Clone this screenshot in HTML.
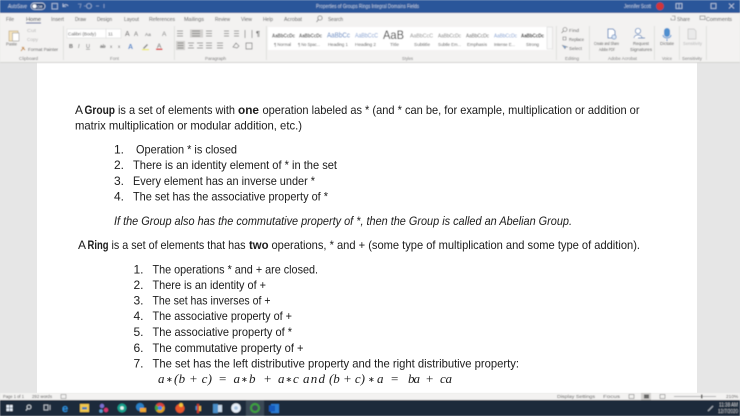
<!DOCTYPE html>
<html lang="en"><head><meta charset="utf-8"><title>Properties of Groups Rings Integral Domains Fields - Word</title>
<style>
html,body{margin:0;padding:0;width:740px;height:416px;overflow:hidden;background:#e6e6e6}
svg{display:block}
text{font-family:"Liberation Sans",sans-serif}
.d{font-size:12px;fill:#1a1a1a}
.b{font-weight:bold}
.i{font-style:italic}
.m{font-family:"Liberation Serif",serif;font-style:italic;font-size:13px;fill:#1a1a1a}
.u{font-family:"Liberation Serif",serif;font-size:13px;fill:#1a1a1a}
.a{font-size:8px;font-style:normal}
.r{font-size:5px;fill:#555}
.t{font-size:5.5px;fill:#555}
.g{font-size:4.6px;fill:#777}
.s{font-size:4.8px;fill:#555}
.w{font-size:5px;fill:#c5d2e6}
.e{font-size:5px;fill:#c8ccd2}
</style></head>
<body>
<svg width="740" height="416" viewBox="0 0 740 416" xmlns="http://www.w3.org/2000/svg">
<rect width="740" height="416" fill="#e6e6e6"/>
<rect x="37" y="62" width="660" height="331" fill="#fff"/>

<g filter="url(#bl)">
<defs><filter id="bl" x="0" y="0" width="100%" height="100%"><feGaussianBlur stdDeviation="0.45"/></filter></defs>
<!-- title bar -->
<rect width="740" height="13" fill="#2b579a"/>
<text class="w" x="8" y="8" textLength="19" lengthAdjust="spacingAndGlyphs" font-style="italic">AutoSave</text>
<rect x="31" y="3" width="14" height="6.500" rx="3.200" fill="#1f3f75" stroke="#dfe6f2" stroke-width=".7"/>
<circle cx="34.500" cy="6.200" r="2" fill="#fff"/>
<text x="37" y="8" font-size="4" fill="#fff">Off</text>
<rect x="52" y="3.500" width="5.500" height="5.500" fill="none" stroke="#b9c8e0" stroke-width=".8"/>
<path d="M63 7c1-3 4-3 5-1M63 3.500v3h3" fill="none" stroke="#b9c8e0" stroke-width=".8"/>
<path d="M78 4l3 0l-1 4M84 6h2" fill="none" stroke="#7f98c2" stroke-width=".8"/>
<circle cx="89" cy="6" r="2.500" fill="none" stroke="#9fb3d4" stroke-width=".8"/>
<path d="M96 6h3M104 4v4" stroke="#8fa6cc" stroke-width=".8"/>
<text class="w" x="316" y="8" textLength="103" lengthAdjust="spacingAndGlyphs">Properties of Groups Rings Integral Domains Fields</text>
<text class="w" x="624" y="8" textLength="27" lengthAdjust="spacingAndGlyphs">Jennifer Scott</text>
<circle cx="660" cy="6.300" r="3.800" fill="#d13438"/>
<rect x="676" y="3.500" width="6" height="5" fill="none" stroke="#cfd9ea" stroke-width=".7"/>
<path d="M679 3.500v5" stroke="#cfd9ea" stroke-width=".6"/>
<rect x="711" y="3.500" width="5" height="5" fill="none" stroke="#cfd9ea" stroke-width=".7"/>
<path d="M729 3.500l5 5M734 3.500l-5 5" stroke="#cfd9ea" stroke-width=".7"/>

<!-- tabs + ribbon -->
<rect y="13" width="740" height="49" fill="#f3f2f1"/>
<rect y="62" width="740" height="1" fill="#d4d3d2"/>
<text class="t" x="6" y="21" textLength="8" lengthAdjust="spacingAndGlyphs">File</text>
<text class="t" x="26" y="21" textLength="15" lengthAdjust="spacingAndGlyphs" style="fill:#333">Home</text>
<rect x="26" y="22.500" width="15" height="1" fill="#2b579a"/>
<text class="t" x="51" y="21" textLength="13" lengthAdjust="spacingAndGlyphs">Insert</text>
<text class="t" x="75" y="21" textLength="11" lengthAdjust="spacingAndGlyphs">Draw</text>
<text class="t" x="97" y="21" textLength="15" lengthAdjust="spacingAndGlyphs">Design</text>
<text class="t" x="124" y="21" textLength="15" lengthAdjust="spacingAndGlyphs">Layout</text>
<text class="t" x="149" y="21" textLength="26" lengthAdjust="spacingAndGlyphs">References</text>
<text class="t" x="184" y="21" textLength="20" lengthAdjust="spacingAndGlyphs">Mailings</text>
<text class="t" x="215" y="21" textLength="15" lengthAdjust="spacingAndGlyphs">Review</text>
<text class="t" x="241" y="21" textLength="11" lengthAdjust="spacingAndGlyphs">View</text>
<text class="t" x="263" y="21" textLength="10" lengthAdjust="spacingAndGlyphs">Help</text>
<text class="t" x="284" y="21" textLength="18" lengthAdjust="spacingAndGlyphs">Acrobat</text>
<circle cx="320" cy="18" r="2.200" fill="none" stroke="#666" stroke-width=".7"/><path d="M318.500 19.500l-2 2.500" stroke="#666" stroke-width=".7"/>
<text class="t" x="328" y="21" textLength="15" lengthAdjust="spacingAndGlyphs">Search</text>
<path d="M672 16h3v4h-4v-2" fill="none" stroke="#777" stroke-width=".6"/>
<text class="t" x="677" y="21" textLength="13" lengthAdjust="spacingAndGlyphs">Share</text>
<rect x="700" y="16" width="5" height="3.500" fill="none" stroke="#777" stroke-width=".6"/>
<text class="t" x="706" y="21" textLength="26" lengthAdjust="spacingAndGlyphs">Comments</text>

<!-- separators -->
<g fill="#dcdbda">
<rect x="63" y="26" width=".8" height="34"/><rect x="174" y="26" width=".8" height="34"/><rect x="266" y="26" width=".8" height="34"/>
<rect x="556" y="26" width=".8" height="34"/><rect x="589" y="26" width=".8" height="34"/><rect x="654" y="26" width=".8" height="34"/>
<rect x="679" y="26" width=".8" height="34"/><rect x="706" y="26" width=".8" height="34"/>
</g>
<!-- clipboard -->
<rect x="9" y="31" width="9" height="10" fill="#f5e4bd" stroke="#b9a578" stroke-width=".6"/>
<rect x="12.500" y="33" width="6.500" height="8" fill="#fff" stroke="#999" stroke-width=".6"/>
<text class="s" x="6" y="45.500" textLength="11" lengthAdjust="spacingAndGlyphs">Paste</text>
<text class="s" x="27" y="32" textLength="9" lengthAdjust="spacingAndGlyphs" style="fill:#b5b5b5">Cut</text>
<text class="s" x="27" y="41" textLength="11" lengthAdjust="spacingAndGlyphs" style="fill:#b5b5b5">Copy</text>
<path d="M22 47l3 3M21 51l3-4" stroke="#c68a3a" stroke-width="1"/>
<text class="s" x="28" y="51" textLength="30" lengthAdjust="spacingAndGlyphs">Format Painter</text>
<text class="g" x="19" y="60" textLength="19" lengthAdjust="spacingAndGlyphs">Clipboard</text>
<!-- font -->
<rect x="67" y="29" width="39" height="9" fill="#fff" stroke="#d0d0d0" stroke-width=".4"/>
<text class="s" x="68" y="35.500" textLength="28" lengthAdjust="spacingAndGlyphs">Calibri (Body)</text>
<rect x="106" y="29" width="15" height="9" fill="#fff" stroke="#d0d0d0" stroke-width=".4"/>
<text class="s" x="108" y="35.500">11</text>
<text x="125" y="36" font-size="7" fill="#555">A</text><text x="134" y="36" font-size="6" fill="#555">A</text>
<text class="s" x="145" y="36">Aa</text>
<text x="162" y="36" font-size="6.500" fill="#777">A</text>
<text x="69" y="48" font-size="5.500" font-weight="bold" fill="#555">B</text>
<text x="78" y="48" font-size="5.500" font-style="italic" fill="#555">I</text>
<text x="86" y="48" font-size="5.500" fill="#555" text-decoration="underline">U</text>
<text x="100" y="48" font-size="5" fill="#555" text-decoration="line-through">ab</text>
<text x="110" y="48" font-size="4.500" fill="#555">x</text><text x="118" y="48" font-size="4.500" fill="#555">x</text>
<text x="128" y="49" font-size="7" font-weight="bold" fill="#3f7fc9">A</text>
<path d="M143 48l4-4 1 1-4 4z" fill="#888"/><rect x="142" y="49" width="7" height="1.200" fill="#eeeb5a"/>
<text x="157" y="48" font-size="6.500" fill="#444">A</text><rect x="156" y="48.500" width="6.500" height="1.500" fill="#d22"/>
<text class="g" x="110" y="60" textLength="9" lengthAdjust="spacingAndGlyphs">Font</text>
<!-- paragraph -->
<g stroke="#777" stroke-width=".7" fill="none">
<path d="M177 31h6M177 33.500h6M177 36h6"/>
<rect x="190" y="29.500" width="13" height="8" fill="#d2d0ce" stroke="none"/>
<path d="M192 31h8M192 33.500h8M192 36h8"/>
<path d="M206 31h6M206 33.500h6M206 36h6"/>
<path d="M224 31h5M224 33.500h5M224 36h5M234 31h5M234 33.500h5M234 36h5M245 30v8M252 30v8"/>
<rect x="176" y="41" width="9" height="9" fill="#d2d0ce" stroke="none"/>
<path d="M177.500 43h6M177.500 45.500h6M177.500 48h6M188 43h6M189 45.500h4M188 48h6M197 43h6M199 45.500h4M197 48h6M206 43h6M206 45.500h6M206 48h6M217 43h6M217 45.500h6M217 48h6"/>
<path d="M233 47l3-4 3 3-2 2zM246 43h6v6h-6z"/>
</g>
<text x="256" y="36" font-size="7" font-weight="bold" fill="#555">¶</text>
<text class="g" x="205" y="60" textLength="21" lengthAdjust="spacingAndGlyphs">Paragraph</text>
<!-- styles -->
<rect x="268" y="27" width="284" height="23" fill="#fff"/>
<g font-size="5.500" fill="#333">
<text x="272" y="37.500" textLength="23" lengthAdjust="spacingAndGlyphs" font-weight="bold" fill="#555">AaBbCcDc</text>
<text x="299" y="37.500" textLength="23" lengthAdjust="spacingAndGlyphs" font-weight="bold" fill="#555">AaBbCcDc</text>
<text x="327" y="37.500" textLength="23" lengthAdjust="spacingAndGlyphs" font-size="7" fill="#4f7fc0">AaBbCc</text>
<text x="355" y="37.500" textLength="23" lengthAdjust="spacingAndGlyphs" font-size="6.500" fill="#7a9bd0">AaBbCcC</text>
<text x="383" y="39" textLength="21" lengthAdjust="spacingAndGlyphs" font-size="12" fill="#333">AaB</text>
<text x="410" y="37.500" textLength="23" lengthAdjust="spacingAndGlyphs" fill="#888">AaBbCcC</text>
<text x="438" y="37.500" textLength="23" lengthAdjust="spacingAndGlyphs" fill="#777">AaBbCcDc</text>
<text x="466" y="37.500" textLength="23" lengthAdjust="spacingAndGlyphs" fill="#555">AaBbCcDc</text>
<text x="494" y="37.500" textLength="23" lengthAdjust="spacingAndGlyphs" fill="#7a9bd0">AaBbCcDc</text>
<text x="521" y="37.500" textLength="23" lengthAdjust="spacingAndGlyphs" font-weight="bold" fill="#222">AaBbCcDc</text>
</g>
<text class="s" x="274" y="46" textLength="17" lengthAdjust="spacingAndGlyphs">¶ Normal</text>
<text class="s" x="298" y="46" textLength="22" lengthAdjust="spacingAndGlyphs">¶ No Spac...</text>
<text class="s" x="328" y="46" textLength="20" lengthAdjust="spacingAndGlyphs">Heading 1</text>
<text class="s" x="355" y="46" textLength="21" lengthAdjust="spacingAndGlyphs">Heading 2</text>
<text class="s" x="390" y="46" textLength="9" lengthAdjust="spacingAndGlyphs">Title</text>
<text class="s" x="414" y="46" textLength="16" lengthAdjust="spacingAndGlyphs">Subtitle</text>
<text class="s" x="438" y="46" textLength="23" lengthAdjust="spacingAndGlyphs">Subtle Em...</text>
<text class="s" x="467" y="46" textLength="20" lengthAdjust="spacingAndGlyphs">Emphasis</text>
<text class="s" x="494" y="46" textLength="21" lengthAdjust="spacingAndGlyphs">Intense E...</text>
<text class="s" x="526" y="46" textLength="13" lengthAdjust="spacingAndGlyphs">Strong</text>
<rect x="547" y="27" width="5.500" height="22" fill="#f8f8f8" stroke="#c8c8c8" stroke-width=".4"/>
<text class="g" x="402" y="60" textLength="11" lengthAdjust="spacingAndGlyphs">Styles</text>
<!-- editing -->
<circle cx="565" cy="29.500" r="2" fill="none" stroke="#666" stroke-width=".6"/><path d="M563.500 31l-2 2" stroke="#666" stroke-width=".6"/>
<text class="s" x="569" y="32" textLength="10" lengthAdjust="spacingAndGlyphs">Find</text>
<path d="M563 37h3v3h-3z" fill="none" stroke="#777" stroke-width=".6"/>
<text class="s" x="569" y="41" textLength="15" lengthAdjust="spacingAndGlyphs">Replace</text>
<path d="M562 45l3 4 1-2 2 0z" fill="#7aa0cc" stroke="#666" stroke-width=".3"/>
<text class="s" x="569" y="50" textLength="13" lengthAdjust="spacingAndGlyphs">Select</text>
<text class="g" x="565" y="60" textLength="14" lengthAdjust="spacingAndGlyphs">Editing</text>
<!-- acrobat -->
<path d="M608 29h5l2 2v7h-7z" fill="#fff" stroke="#3a6fb0" stroke-width=".8"/><circle cx="614" cy="37" r="2.200" fill="#dbe7f6" stroke="#3a6fb0" stroke-width=".6"/>
<text class="s" x="594" y="45" textLength="25" lengthAdjust="spacingAndGlyphs">Create and Share</text>
<text class="s" x="599" y="51" textLength="16" lengthAdjust="spacingAndGlyphs">Adobe PDF</text>
<circle cx="638" cy="31" r="2.700" fill="#fff" stroke="#3a6fb0" stroke-width=".7"/><path d="M634 38c0-4 8-4 8 0" fill="#fff" stroke="#3a6fb0" stroke-width=".7"/><path d="M638 38h7" stroke="#3a6fb0" stroke-width=".8"/>
<text class="s" x="633" y="45" textLength="16" lengthAdjust="spacingAndGlyphs">Request</text>
<text class="s" x="630" y="51" textLength="22" lengthAdjust="spacingAndGlyphs">Signatures</text>
<text class="g" x="608" y="60" textLength="29" lengthAdjust="spacingAndGlyphs">Adobe Acrobat</text>
<!-- voice -->
<rect x="664" y="28" width="6" height="9" rx="3" fill="#4f8fcf"/><path d="M663 35c0 4 8 4 8 0M667 39v2" fill="none" stroke="#4f8fcf" stroke-width="1"/>
<text class="s" x="660" y="45" textLength="14" lengthAdjust="spacingAndGlyphs">Dictate</text>
<text class="g" x="662" y="60" textLength="10" lengthAdjust="spacingAndGlyphs">Voice</text>
<!-- sensitivity -->
<path d="M688 29h6l2 2v8h-8z" fill="#eaeaea" stroke="#c5c5c5" stroke-width=".7"/>
<text class="s" x="683" y="45" textLength="19" lengthAdjust="spacingAndGlyphs" style="fill:#b5b5b5">Sensitivity</text>
<text class="g" x="682" y="60" textLength="20" lengthAdjust="spacingAndGlyphs">Sensitivity</text>

<!-- status bar -->
<rect y="393" width="740" height="7" fill="#f3f2f1"/>
<text class="s" x="3" y="398" textLength="21" lengthAdjust="spacingAndGlyphs">Page 1 of 1</text>
<text class="s" x="32" y="398" textLength="20" lengthAdjust="spacingAndGlyphs">292 words</text>
<rect x="61" y="394.500" width="5" height="4" fill="none" stroke="#777" stroke-width=".5"/>
<text class="s" x="557" y="398" textLength="38" lengthAdjust="spacingAndGlyphs">Display Settings</text>
<text class="s" x="603" y="398" textLength="17" lengthAdjust="spacingAndGlyphs">Focus</text>
<rect x="629" y="394.500" width="5" height="4" fill="none" stroke="#666" stroke-width=".5"/>
<rect x="641" y="393" width="10" height="7" fill="#d2d0ce"/><rect x="644" y="394.500" width="5" height="4" fill="#666"/>
<rect x="660" y="394.500" width="5" height="4" fill="none" stroke="#666" stroke-width=".5"/>
<rect x="674" y="396.200" width="42" height=".6" fill="#888"/><rect x="701" y="394.500" width="1.500" height="4" fill="#555"/>
<text class="s" x="726" y="398">210%</text>

<!-- taskbar -->
<rect y="400" width="740" height="16" fill="#1b2a3b"/>
<rect x="246" y="400" width="18" height="16" fill="#3a4857"/>
<g fill="#e8f0fa"><rect x="6.500" y="405" width="2.800" height="2.800"/><rect x="9.800" y="405" width="2.800" height="2.800"/><rect x="6.500" y="408.300" width="2.800" height="2.800"/><rect x="9.800" y="408.300" width="2.800" height="2.800"/></g>
<circle cx="29" cy="407" r="2" fill="none" stroke="#e0e6ee" stroke-width=".8"/><path d="M27.500 408.500l-1.500 2" stroke="#e0e6ee" stroke-width=".8"/>
<rect x="44" y="405" width="4" height="5" fill="none" stroke="#e0e6ee" stroke-width=".7"/><path d="M50 405v5" stroke="#e0e6ee" stroke-width=".7"/>
<text x="62" y="412" font-size="11" font-weight="bold" style="fill:#2f8fdc">e</text>
<rect x="80" y="404" width="9" height="8" fill="#f1c84b"/><rect x="82" y="407" width="5" height="2.500" fill="#4a7fb5"/>
<circle cx="102" cy="406" r="2.200" fill="#7b6fd0"/><circle cx="106" cy="410" r="2.200" fill="#d8366f"/><circle cx="101" cy="411" r="1.800" fill="#5a9fd0"/>
<circle cx="122" cy="408" r="4.500" fill="#16a08d"/><circle cx="122" cy="408" r="1.800" fill="#e8f8f4"/>
<circle cx="140" cy="407" r="4" fill="#2a80c8"/><rect x="140" y="408" width="6" height="4" fill="#f0a830"/>
<circle cx="160" cy="408" r="4.800" fill="#e0a020"/><path d="M160 408L156 405A4.800 4.800 0 0 1 164.500 406z" fill="#d9453a"/><path d="M160 408l-3.800 3a4.800 4.800 0 0 1-.4-6z" fill="#3fa040"/><circle cx="160" cy="408" r="2" fill="#4285f4"/>
<circle cx="180" cy="408.500" r="4.500" fill="#e8562a"/><circle cx="181" cy="405" r="2" fill="#f5c33b"/>
<rect x="197" y="404" width="2" height="9" fill="#c83c2c"/><rect x="199" y="406" width="2" height="5" fill="#e6b34a"/><rect x="195.500" y="406" width="1.500" height="4" fill="#3a80c0"/>
<rect x="213" y="404" width="5" height="9" fill="#4a8ec8"/><rect x="218" y="405" width="4" height="7" fill="#c8d8e8"/>
<circle cx="236" cy="408" r="4.800" fill="#e6eef8"/><circle cx="236" cy="408" r="1.800" fill="#a8c4e0"/>
<circle cx="255" cy="408" r="4" fill="none" stroke="#3da13d" stroke-width="2"/>
<rect x="271" y="404" width="8" height="9" fill="#2b7cd3"/><rect x="269" y="405.500" width="6" height="6" fill="#185abd"/>
<path d="M708 411l3-3 2-2" stroke="#aab2bc" stroke-width="1.200"/>
<text class="e" x="719" y="406.500" textLength="19" lengthAdjust="spacingAndGlyphs">11:38 AM</text>
<text class="e" x="718" y="413" textLength="20" lengthAdjust="spacingAndGlyphs">12/7/2020</text>
</g>

<!-- document -->
<g filter="url(#bl2)">
<defs><filter id="bl2" x="0" y="0" width="100%" height="100%"><feGaussianBlur stdDeviation="0.25"/></filter></defs>
<text class="d" x="75" y="114">A</text>
<text class="d b" x="84.500" y="114" textLength="30.500" lengthAdjust="spacingAndGlyphs">Group</text>
<text class="d" x="118" y="114" textLength="117" lengthAdjust="spacingAndGlyphs">is a set of elements with</text>
<text class="d b" x="238" y="114" textLength="21" lengthAdjust="spacingAndGlyphs">one</text>
<text class="d" x="262.500" y="114" textLength="377" lengthAdjust="spacingAndGlyphs">operation labeled as * (and * can be, for example, multiplication or addition or</text>
<text class="d" x="75" y="129.500" textLength="227" lengthAdjust="spacingAndGlyphs">matrix multiplication or modular addition, etc.)</text>

<text class="d" x="114" y="153.500">1.</text>
<text class="d" x="136" y="153.500" textLength="101" lengthAdjust="spacingAndGlyphs">Operation * is closed</text>
<text class="d" x="114" y="169">2.</text>
<text class="d" x="133" y="169" textLength="204" lengthAdjust="spacingAndGlyphs">There is an identity element of * in the set</text>
<text class="d" x="114" y="185">3.</text>
<text class="d" x="133" y="185" textLength="182" lengthAdjust="spacingAndGlyphs">Every element has an inverse under *</text>
<text class="d" x="114" y="200.500">4.</text>
<text class="d" x="133" y="200.500" textLength="195" lengthAdjust="spacingAndGlyphs">The set has the associative property of *</text>

<text class="d i" x="114" y="225" textLength="458" lengthAdjust="spacingAndGlyphs">If the Group also has the commutative property of *, then the Group is called an Abelian Group.</text>

<text class="d" x="78" y="249">A</text>
<text class="d b" x="87.500" y="249" textLength="21" lengthAdjust="spacingAndGlyphs">Ring</text>
<text class="d" x="111.500" y="249" textLength="134" lengthAdjust="spacingAndGlyphs">is a set of elements that has</text>
<text class="d b" x="249" y="249" textLength="19.500" lengthAdjust="spacingAndGlyphs">two</text>
<text class="d" x="271.500" y="249" textLength="368.500" lengthAdjust="spacingAndGlyphs">operations, * and + (some type of multiplication and some type of addition).</text>

<text class="d" x="133.500" y="273.500">1.</text>
<text class="d" x="152.500" y="273.500" textLength="165.500" lengthAdjust="spacingAndGlyphs">The operations * and + are closed.</text>
<text class="d" x="133.500" y="289">2.</text>
<text class="d" x="152.500" y="289" textLength="113.500" lengthAdjust="spacingAndGlyphs">There is an identity of +</text>
<text class="d" x="133.500" y="304.500">3.</text>
<text class="d" x="152.500" y="304.500" textLength="118" lengthAdjust="spacingAndGlyphs">The set has inverses of +</text>
<text class="d" x="133.500" y="320">4.</text>
<text class="d" x="152.500" y="320" textLength="139.500" lengthAdjust="spacingAndGlyphs">The associative property of +</text>
<text class="d" x="133.500" y="336">5.</text>
<text class="d" x="152.500" y="336" textLength="139.500" lengthAdjust="spacingAndGlyphs">The associative property of *</text>
<text class="d" x="133.500" y="352">6.</text>
<text class="d" x="152.500" y="352" textLength="151" lengthAdjust="spacingAndGlyphs">The commutative property of +</text>
<text class="d" x="133.500" y="367.500">7.</text>
<text class="d" x="152.500" y="367.500" textLength="366.500" lengthAdjust="spacingAndGlyphs">The set has the left distributive property and the right distributive property:</text>

<text class="m" x="158" y="383">a</text><text class="m a" x="166" y="382">∗</text><text class="m" x="174" y="383" textLength="38" lengthAdjust="spacing">(b + c)</text>
<text class="u" x="219" y="383">=</text>
<text class="m" x="233.500" y="383">a</text><text class="m a" x="241" y="382">∗</text><text class="m" x="249" y="383">b</text>
<text class="u" x="264" y="383">+</text>
<text class="m" x="278" y="383">a</text><text class="m a" x="285.500" y="382">∗</text><text class="m" x="293" y="383">c</text>
<text class="m" x="303" y="383" textLength="22">and</text>
<text class="m" x="329" y="383" textLength="36" lengthAdjust="spacing">(b + c)</text>
<text class="m a" x="368" y="382">∗</text><text class="m" x="377" y="383">a</text>
<text class="u" x="391" y="383">=</text>
<text class="m" x="408" y="383" textLength="12">ba</text>
<text class="u" x="426" y="383">+</text>
<text class="m" x="440" y="383" textLength="12">ca</text>
</g>
</svg>
</body></html>
